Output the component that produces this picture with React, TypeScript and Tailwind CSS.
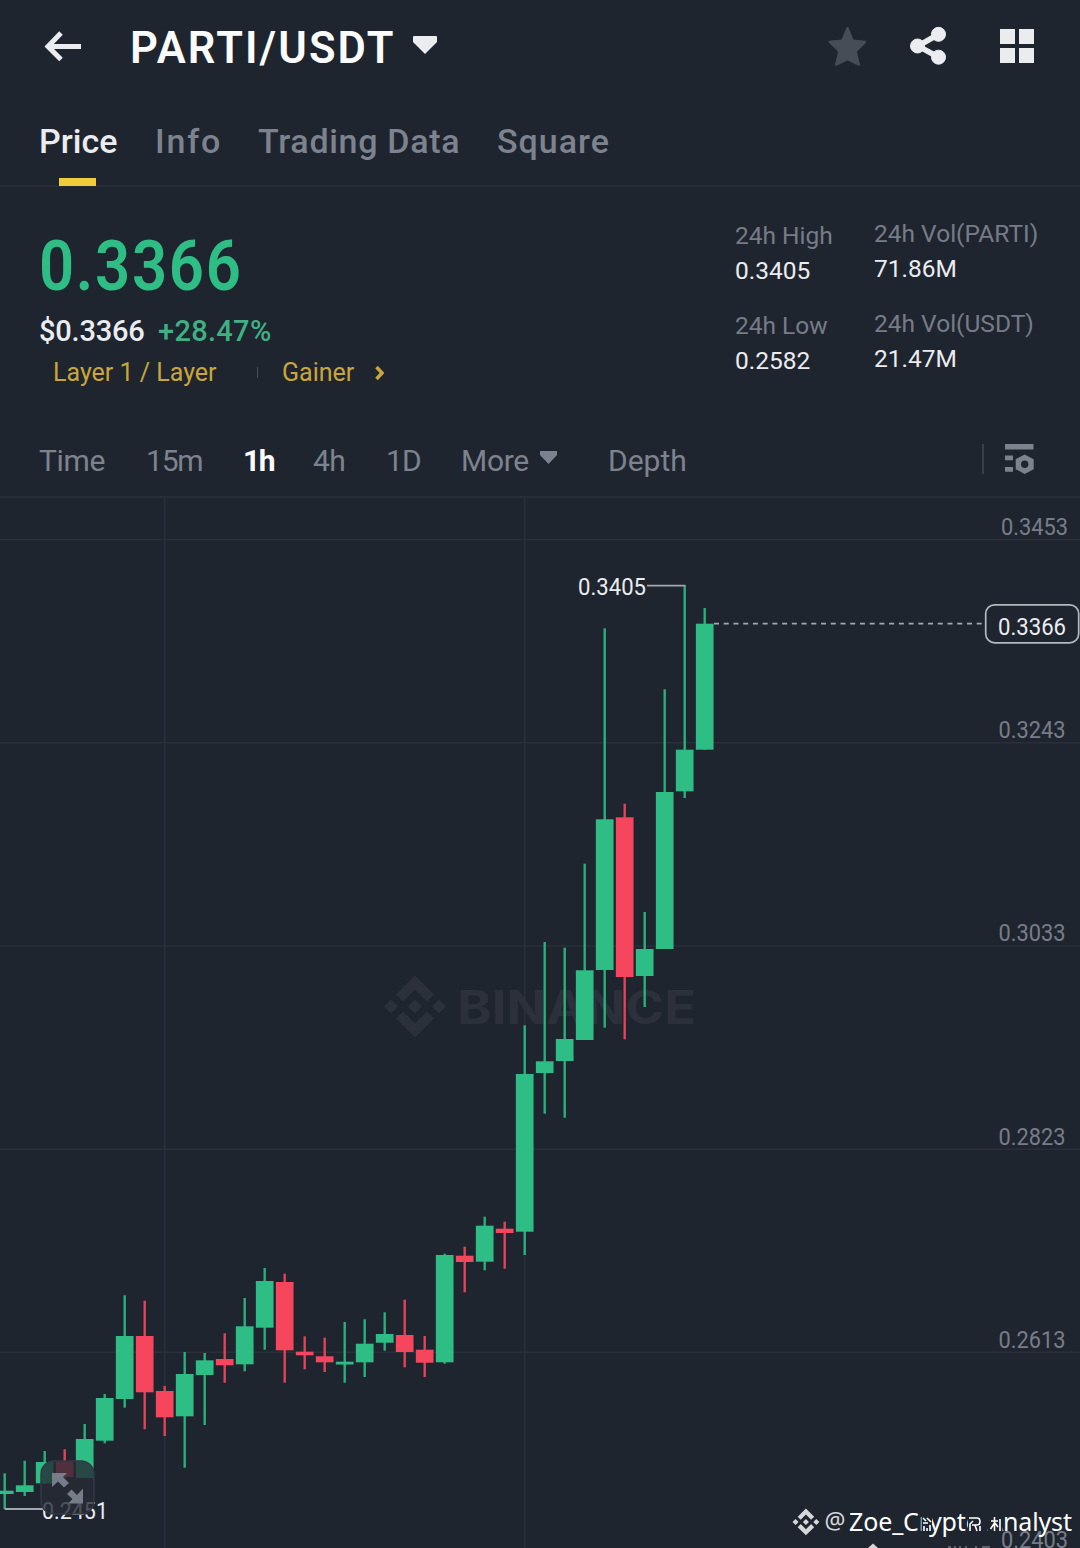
import { clsx } from "clsx";

const UP = "#2ebd85";
const DOWN = "#f6465d";
const STEP = 20;
const FIRST_X = 4.7;
const BODY_WIDTH = 17.7;

// [high, bodyTop, bodyBottom, low, isDown]
type Candle = [number, number, number, number, number?];

const candles: Candle[] = [
  [1473.3, 1490.7, 1494, 1509],
  [1460.7, 1485.3, 1492, 1496],
  [1451, 1462, 1483.3, 1484],
  [1449.3, 1462, 1477, 1478, 1],
  [1424, 1439, 1478, 1478],
  [1394, 1398, 1440.7, 1443.3],
  [1295.3, 1336, 1399, 1407.7],
  [1300.7, 1336, 1392.3, 1429.3, 1],
  [1386, 1391, 1417.3, 1436, 1],
  [1352, 1374, 1416.3, 1467.7],
  [1353, 1360.3, 1375, 1425],
  [1333.3, 1359, 1365.3, 1382.7, 1],
  [1298, 1326.3, 1364.3, 1371.3],
  [1268, 1281, 1327.7, 1349.7],
  [1273.7, 1282, 1350.3, 1382.7, 1],
  [1336.3, 1351.7, 1355.3, 1369.3, 1],
  [1337.7, 1356.3, 1362.3, 1372, 1],
  [1322, 1361.7, 1364.5, 1382.7],
  [1319.3, 1343.7, 1362.3, 1377],
  [1312.3, 1334, 1342.7, 1350.7],
  [1299.7, 1335, 1352, 1367.3, 1],
  [1336, 1349.7, 1362.7, 1377, 1],
  [1253.7, 1255, 1362.3, 1363.7],
  [1246.7, 1255.7, 1262, 1292.3, 1],
  [1216.7, 1225.7, 1261.7, 1270.3],
  [1221.7, 1228.7, 1233, 1268.7, 1],
  [1025.3, 1074, 1231.7, 1255],
  [942, 1061.3, 1073, 1113.7],
  [947.7, 1039, 1061, 1117.7],
  [863.7, 970.3, 1040, 1040],
  [628.3, 819.3, 970, 1027.7],
  [803.7, 817.3, 977, 1039.3, 1],
  [912, 949, 976, 1007],
  [689.3, 792, 949, 949],
  [586, 749.7, 791.3, 798],
  [608, 623.7, 749.7, 749.7],
];

const axis = [
  { label: "0.3453", x: 1001, line: 539.7 },
  { label: "0.3243", x: 998.5, line: 742.7 },
  { label: "0.3033", x: 998.5, line: 946 },
  { label: "0.2823", x: 998.5, line: 1149.3 },
  { label: "0.2613", x: 998.5, line: 1352.3 },
  { label: "0.2403", x: 1001, line: 1553 },
];

const tabs = [
  { label: "Price", slot: "w-[116px]", active: true },
  { label: "Info", slot: "w-[103px] tracking-[1.8px]" },
  { label: "Trading Data", slot: "w-[239px] tracking-[0.7px]" },
  { label: "Square", slot: "tracking-[1px]" },
];

const intervals = [
  { label: "Time", slot: "w-[107px] tracking-[-0.3px]" },
  { label: "15m", slot: "w-[97px] tracking-[-1.2px]" },
  { label: "1h", slot: "w-[70px] tracking-[-1.5px]", active: true },
  { label: "4h", slot: "w-[73px] tracking-[-0.5px]" },
  { label: "1D", slot: "w-[75px] tracking-[-0.8px]" },
];

const BinanceMark = () => (
  <path d="M16.624 13.9202l2.7175 2.7154-7.353 7.353-7.353-7.352 2.7175-2.7164 4.6355 4.6595 4.6356-4.6595zm4.6366-4.6366L24 12l-2.7154 2.7164L18.5682 12l2.6924-2.7164zm-9.272.001l2.7163 2.6914-2.7164 2.7174v-.001L9.2721 12l2.7164-2.7154zm-9.2722-.001L5.4088 12l-2.6914 2.6924L0 12l2.7164-2.7164zM11.9885.0115l7.353 7.329-2.7174 2.7154-4.6356-4.6356-4.6355 4.6595-2.7174-2.7154 7.353-7.353z" />
);

function Header() {
  return (
    <header className="flex h-[92px] items-center pr-[46px] pl-[44px]">
      <svg className="h-[30px] w-[38px]" viewBox="0 0 38 30" fill="none" stroke="#eaecef" strokeWidth="5">
        <path d="M37 15.500H4M17 2L4 15.500l13 13" />
      </svg>
      <h1 className="mt-[5px] ml-[48px] w-[283px] text-[43.5px] leading-[60px] font-semibold tracking-[2.1px] whitespace-nowrap text-[#fafbfc]">
        PARTI/USDT
      </h1>
      <svg className="-mt-[2px] h-[18px] w-[24px]" viewBox="0 0 24 18" fill="#eaecef">
        <path d="M1 0h22a1 1 0 0 1 1 1v5L12 18 0 6V1a1 1 0 0 1 1-1z" />
      </svg>
      <div className="ml-auto flex items-center">
        <svg className="h-[40px] w-[38px]" viewBox="0 0 38 40" fill="#474d57" stroke="#474d57" strokeWidth="2" strokeLinejoin="round">
          <path d="M19.500 2l5.300 12.500 12.700 1.300-9.600 9.600 3.100 13.400-11.500-5.500L8 38.800l3.100-13.400L1.500 15.800l12.700-1.300z" />
        </svg>
        <svg className="ml-[44px] h-[40px] w-[38px]" viewBox="0 0 38 40" fill="#eaecef" stroke="#eaecef">
          <path d="M29 8L8 20l21 11.500" fill="none" strokeWidth="5.500" />
          <circle cx="28.500" cy="8.300" r="7" />
          <circle cx="7.500" cy="20" r="7" />
          <circle cx="28.500" cy="31.200" r="7" />
        </svg>
        <svg className="ml-[52px] h-[34px] w-[34px]" viewBox="0 0 34 34" fill="#eaecef">
          <path d="M0 0h15v15H0zM19 0h15v15H19zM0 19h15v15H0zM19 19h15v15H19z" />
        </svg>
      </div>
    </header>
  );
}

function Tabs() {
  return (
    <nav className="flex h-[95px] items-center border-b-2 border-[#272c36] pt-[5px] pl-[39px] text-[34px] font-medium">
      {tabs.map((tab) => (
        <div
          key={tab.label}
          className={clsx(
            "relative flex h-full items-center whitespace-nowrap",
            tab.slot,
            tab.active ? "text-[#eaecef]" : "text-[#7d838e]"
          )}
        >
          {tab.label}
          {tab.active && <span className="absolute -bottom-px left-[20px] h-[8px] w-[37px] bg-[#f0cb3c]" />}
        </div>
      ))}
    </nav>
  );
}

function Stat({ label, value }: { label: string; value: string }) {
  return (
    <div className="text-[24.5px] leading-[35px] whitespace-nowrap">
      <p className="text-[#767c87]">{label}</p>
      <p className="text-[#eaecef]">{value}</p>
    </div>
  );
}

function Summary() {
  return (
    <section className="flex h-[237px] justify-between pr-[38px] pl-[39px]">
      <div className="pt-[42px] whitespace-nowrap">
        <p className="origin-left scale-x-[0.88] text-[70px] leading-[74px] font-semibold tracking-[1.9px] text-[#2ebd85]">
          0.3366
        </p>
        <p className="mt-[8px] flex text-[29px] leading-[41px] font-medium">
          <span className="w-[119px] tracking-[-0.2px] text-[#eaecef]">$0.3366</span>
          <span className="tracking-[0.3px] text-[#3fb083]">+28.47%</span>
        </p>
        <div className="flex items-center pl-[14px] text-[25px] leading-[41px] text-[#c9a63c]">
          <span className="w-[204px]">Layer 1 / Layer</span>
          <span className="h-[11px] w-px bg-[#474d57]" />
          <span className="ml-[24px] w-[93px]">Gainer</span>
          <svg className="h-[14px] w-[9px]" viewBox="0 0 9 14" fill="none" stroke="#c9a63c" strokeWidth="3.5">
            <path d="M1.500 1l5.500 6-5.500 6" />
          </svg>
        </div>
      </div>
      <div className="flex">
        <div className="flex w-[139px] flex-col gap-[20px] pt-[31px]">
          <Stat label="24h High" value="0.3405" />
          <Stat label="24h Low" value="0.2582" />
        </div>
        <div className="flex w-[168px] flex-col gap-[20px] pt-[29px]">
          <Stat label="24h Vol(PARTI)" value="71.86M" />
          <Stat label="24h Vol(USDT)" value="21.47M" />
        </div>
      </div>
    </section>
  );
}

function IntervalBar() {
  return (
    <div className="flex h-[74px] items-center border-b-2 border-[#292d37] pr-[46px] pl-[39px] text-[30px] whitespace-nowrap text-[#7d838e]">
      {intervals.map((item) => (
        <span key={item.label} className={clsx(item.slot, item.active && "font-bold text-[#fafbfc]")}>
          {item.label}
        </span>
      ))}
      <span className="w-[79px] tracking-[-0.3px]">More</span>
      <svg className="-mt-[5px] h-[13px] w-[17px]" viewBox="0 0 17 13" fill="#7d838e">
        <path d="M0 0h17v4L8.500 13 0 4z" />
      </svg>
      <span className="ml-[51px]">Depth</span>
      <span className="-mt-[3px] ml-auto h-[30px] w-[2px] bg-[#3a404b]" />
      <svg className="-mt-[2px] ml-[21px] h-[30px] w-[29px]" viewBox="0 0 29 30" fill="#7d838e">
        <path d="M0 0h28.500v5.500H0zM0 11.500h8v4.700H0zM0 23h8v4.700H0z" />
        <path fillRule="evenodd" d="M19.700 10.500l9 4.700v10l-9 4.800-9-4.800v-10zm0 6a3.700 3.700 0 1 0 0 7.400 3.700 3.700 0 0 0 0-7.400z" />
      </svg>
    </div>
  );
}

function Chart() {
  return (
    <svg className="block h-[1050px] w-[1080px]" viewBox="0 498 1080 1050" fontFamily="Roboto, sans-serif" fontSize="23.500">
      <g stroke="#2a2f39" strokeWidth="1.600">
        {axis.map((a) => (
          <line key={a.label} x1="0" x2="1080" y1={a.line} y2={a.line} />
        ))}
        <line x1="164.700" x2="164.700" y1="498" y2="1548" />
        <line x1="524.700" x2="524.700" y1="498" y2="1548" />
      </g>

      {/* Exchange watermark, sits behind the candles */}
      <g fill="#2c303b">
        <g transform="translate(384 975.500) scale(2.580)">
          <BinanceMark />
        </g>
        <text
          x="457"
          y="1023.500"
          fontFamily="Inter, sans-serif"
          fontWeight="700"
          fontSize="46"
          textLength="239"
          lengthAdjust="spacingAndGlyphs"
        >
          BINANCE
        </text>
      </g>

      <g fill="#777d88">
        {axis.map((a) => (
          <text key={a.label} x={a.x} y={a.line - 4.7} textLength="67" lengthAdjust="spacingAndGlyphs">
            {a.label}
          </text>
        ))}
      </g>

      {candles.map(([high, top, bottom, low, down], i) => {
        const x = FIRST_X + i * STEP;
        return (
          <g key={i} fill={down ? DOWN : UP}>
            <rect x={x - 1.2} y={high} width={2.4} height={low - high} opacity="0.900" />
            <rect x={x - BODY_WIDTH / 2} y={top} width={BODY_WIDTH} height={bottom - top} />
          </g>
        );
      })}

      {/* High / low markers */}
      <g stroke="#a3a8b0" strokeWidth="1.800">
        <path d="M647 585.700h38.500M4.700 1509H43" fill="none" />
        <line x1="714" x2="985" y1="623.700" y2="623.700" strokeDasharray="5 4.730" />
      </g>
      <g fill="#eaecef">
        <text x="578" y="594.700" textLength="68" lengthAdjust="spacingAndGlyphs">0.3405</text>
        <text x="42" y="1518.700" textLength="66" lengthAdjust="spacingAndGlyphs">0.2451</text>
      </g>

      {/* Last price */}
      <rect x="985.700" y="604.800" width="93" height="38" rx="9" fill="#1f252f" stroke="#b4b8bf" strokeWidth="1.700" />
      <text x="998" y="634.700" fill="#eaecef" textLength="68" lengthAdjust="spacingAndGlyphs">0.3366</text>

      {/* Expand button */}
      <rect x="41" y="1461" width="53" height="53" rx="13" fill="#252b35" fillOpacity="0.800" stroke="#333944" strokeWidth="1.500" />
      <g fill="#777d88">
        <path d="M52 1473h15l-4 4 6 6-5 4.500-6-6-6 5.500z" />
        <path d="M83 1503.500H68l4.500-4.500-5.500-5 4.500-4.500 5.500 5.500 6-6.500z" />
      </g>

      {/* Author signature */}
      <g fontFamily="'Noto Sans', sans-serif" fontSize="25">
        <g fill="#d5d7da" transform="translate(792.500 1508.500) scale(1.120)">
          <BinanceMark />
        </g>
        <text x="824.500" y="1529" fill="#d5d7da" fontSize="23" textLength="21" lengthAdjust="spacingAndGlyphs">@</text>
        <text x="849" y="1531" fill="#ffffff" textLength="223">Zoe_Crypto Analyst</text>
        {/* broken-up strokes over the r, o and A */}
        <g fill="#1f252f">
          <rect x="921.500" y="1515.500" width="10.500" height="16" />
          <rect x="968" y="1515.500" width="13.500" height="16.500" />
          <rect x="987.500" y="1511" width="15" height="21" />
        </g>
        <g fill="none" stroke="#ffffff" strokeWidth="1.600">
          <path d="M923 1518l3 3M927 1518l4 4M923 1523h5M924 1526v5M930 1525v6M927 1528v3" />
          <path d="M969 1518h8q3 0 3 3.500t-3 3.500h-5M970 1531v-7l3-3M975 1525l2 6M980 1526v5" />
          <path d="M991 1521h7M994.500 1517v14M994.500 1523l-4 6M995 1523l3 4M1000 1519v12" />
        </g>
        <path d="M868 1548l5-4.500 5 4.500z" fill="#d5d7da" />
        <path d="M948 1547h3M954 1547h2M959 1547h2M965 1547h2M975 1547h2M982 1547h8" stroke="#9a9ea5" />
      </g>
    </svg>
  );
}

export default function App() {
  return (
    <main className="h-[1548px] w-[1080px] overflow-hidden bg-[#1f252f] font-['Roboto',sans-serif]">
      <Header />
      <Tabs />
      <Summary />
      <IntervalBar />
      <Chart />
    </main>
  );
}
